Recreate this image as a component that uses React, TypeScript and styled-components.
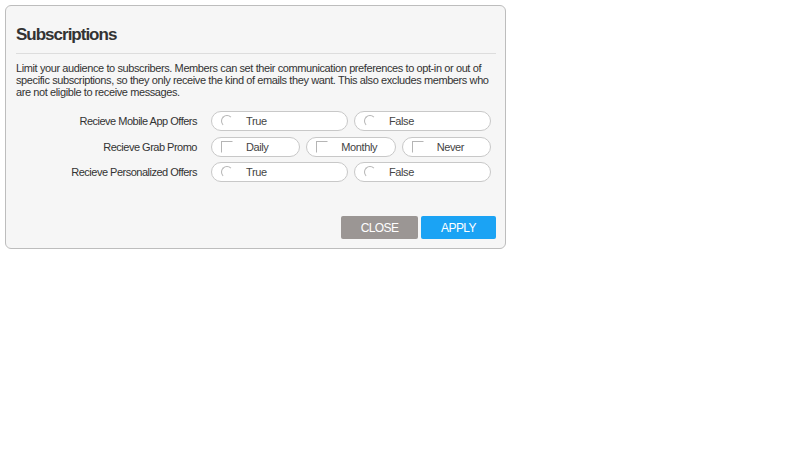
import React from "react";
import styled, { createGlobalStyle } from "styled-components";

const Global = createGlobalStyle`
  html, body { margin: 0; padding: 0; background: #fff; }
  body { font-family: "Liberation Sans", Arial, sans-serif; color: #333; }
`;

const Page = styled.div`
  padding: 5px;
`;

const Panel = styled.div`
  width: 480px;
  height: 242px;
  box-sizing: content-box;
  padding: 0 9px 0 10px;
  background: #f6f6f6;
  border: 1px solid #bdbdbd;
  border-radius: 6px;
  display: flex;
  flex-direction: column;
`;

const Title = styled.h2`
  margin: 0;
  padding: 19px 0 8px;
  font-size: 17px;
  letter-spacing: -1px;
  font-weight: bold;
  color: #333;
  border-bottom: 1px solid #ddd;
`;

const Desc = styled.p`
  margin: 8px 0 0;
  font-size: 11px;
  letter-spacing: -0.4px;
  line-height: 12px;
  color: #333;
`;

const Rows = styled.div`
  margin-top: 13px;
  display: flex;
  flex-direction: column;
  gap: 5.5px;
`;

const Row = styled.div`
  display: flex;
  align-items: center;
  gap: 14px;
`;

const Label = styled.div`
  width: 181px;
  text-align: right;
  font-size: 11px;
  letter-spacing: -0.5px;
  color: #333;
`;

const Options = styled.div<{ $cols: number }>`
  width: 280px;
  display: grid;
  grid-template-columns: repeat(${(p) => p.$cols}, 1fr);
  gap: 6px;
`;

const Pill = styled.label`
  height: 18px;
  border: 1px solid #c8c8c8;
  border-radius: 10px;
  background: #fff;
  display: flex;
  align-items: center;
  padding-left: 9px;
  font-size: 11px;
  letter-spacing: -0.4px;
  color: #444;
  box-sizing: content-box;
`;

const Mark = styled.span<{ $round: boolean }>`
  width: 10px;
  height: 10px;
  border-radius: ${(p) => (p.$round ? "50%" : "0")};
  border-top: 1px solid #b5b5b5;
  border-left: 1px solid #b5b5b5;
  border-right: 1px solid transparent;
  border-bottom: 1px solid transparent;
  margin-right: 13px;
  flex: none;
`;

const Footer = styled.div`
  margin-top: auto;
  margin-bottom: 9px;
  display: flex;
  justify-content: flex-end;
  gap: 3px;
`;

const Button = styled.button<{ $primary?: boolean }>`
  height: 23px;
  border: none;
  border-radius: 2px;
  background: ${(p) => (p.$primary ? "#1ba3f4" : "#9b9694")};
  color: #fff;
  font-family: "Liberation Sans", Arial, sans-serif;
  font-size: 12px;
  letter-spacing: -0.6px;
  text-transform: uppercase;
  width: ${(p) => (p.$primary ? "75px" : "77px")};
  padding: 0;
`;

const rows = [
  { label: "Recieve Mobile App Offers", round: true, opts: ["True", "False"] },
  { label: "Recieve Grab Promo", round: false, opts: ["Daily", "Monthly", "Never"] },
  { label: "Recieve Personalized Offers", round: true, opts: ["True", "False"] },
];

export default function App() {
  return (
    <Page>
      <Global />
      <Panel>
        <Title>Subscriptions</Title>
        <Desc>
          Limit your audience to subscribers. Members can set their communication preferences to opt-in or out of
          specific subscriptions, so they only receive the kind of emails they want. This also excludes members who
          are not eligible to receive messages.
        </Desc>
        <Rows>
          {rows.map((r) => (
            <Row key={r.label}>
              <Label>{r.label}</Label>
              <Options $cols={r.opts.length}>
                {r.opts.map((o) => (
                  <Pill key={o}>
                    <Mark $round={r.round} />
                    {o}
                  </Pill>
                ))}
              </Options>
            </Row>
          ))}
        </Rows>
        <Footer>
          <Button>Close</Button>
          <Button $primary>Apply</Button>
        </Footer>
      </Panel>
    </Page>
  );
}
